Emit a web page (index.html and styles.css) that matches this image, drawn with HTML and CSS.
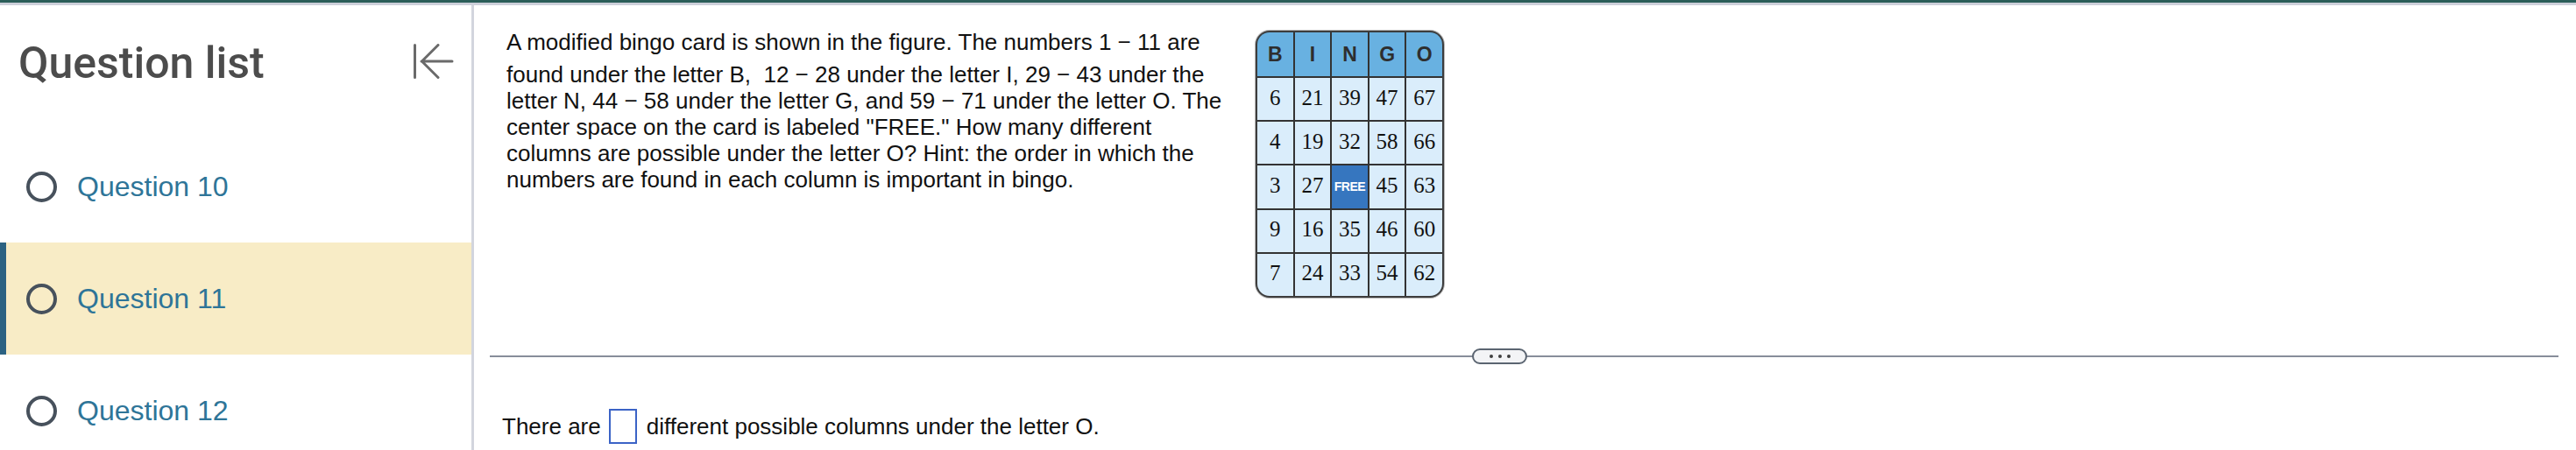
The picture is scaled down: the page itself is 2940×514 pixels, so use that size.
FILE: index.html
```html
<!DOCTYPE html>
<html lang="en">
<head>
<meta charset="utf-8">
<title>Question 11</title>
<link rel="stylesheet" href="styles.css">
</head>
<body>
<div class="topbar"></div>
<div class="layout">
  <aside class="sidebar">
    <div class="side-head">
      <h2 class="side-title">Question list</h2>
      <button class="collapse" aria-label="Collapse question list">
        <svg width="48" height="40" viewBox="0 0 48 40"><path d="M3.5 1.5v37M11 20h35M30 1.5L11.5 20L30 38.5" fill="none" stroke="#6a6a6a" stroke-width="3" stroke-linecap="round" stroke-linejoin="round"/></svg>
      </button>
    </div>
    <ul class="qlist">
      <li class="qitem"><span class="radio"></span><span class="qlabel">Question 10</span></li>
      <li class="qitem active"><span class="radio"></span><span class="qlabel">Question 11</span></li>
      <li class="qitem"><span class="radio"></span><span class="qlabel">Question 12</span></li>
    </ul>
  </aside>
  <main class="main">
    <section class="question">
      <p class="prompt">A modified bingo card is shown in the figure. The numbers <span class="m lead">1 − 11</span> are<br>found under the letter B,&nbsp; <span class="m">12 − 28</span> under the letter I, <span class="m">29 − 43</span> under the<br>letter N, <span class="m">44 − 58</span> under the letter G, and <span class="m">59 − 71</span> under the letter O. The<br>center space on the card is labeled "FREE." How many different<br>columns are possible under the letter O? Hint: the order in which the<br>numbers are found in each column is important in bingo.</p>
      <div class="bingo">
        <div class="h">B</div><div class="h">I</div><div class="h">N</div><div class="h">G</div><div class="h">O</div>
        <div class="c">6</div><div class="c">21</div><div class="c">39</div><div class="c">47</div><div class="c">67</div>
        <div class="c">4</div><div class="c">19</div><div class="c">32</div><div class="c">58</div><div class="c">66</div>
        <div class="c">3</div><div class="c">27</div><div class="c free">FREE</div><div class="c">45</div><div class="c">63</div>
        <div class="c">9</div><div class="c">16</div><div class="c">35</div><div class="c">46</div><div class="c">60</div>
        <div class="c">7</div><div class="c">24</div><div class="c">33</div><div class="c">54</div><div class="c">62</div>
      </div>
    </section>
    <div class="divider"><span class="handle"><i></i><i></i><i></i></span></div>
    <section class="answer">There are<span class="box"></span>different possible columns under the letter O.</section>
  </main>
</div>
</body>
</html>
```
FILE: styles.css
```css
html, body {
  margin: 0;
  padding: 0;
  background: #ffffff;
}
body {
  width: 2940px;
  height: 514px;
  overflow: hidden;
  font-family: "Liberation Sans", Arial, sans-serif;
}
.topbar {
  height: 3px;
  background: #2b5e59;
  border-bottom: 3px solid #cdd0da;
}
.layout {
  display: flex;
  height: 508px;
}
.sidebar {
  width: 538px;
  flex: none;
  border-right: 3px solid #d2d5de;
}
.side-head {
  display: flex;
  justify-content: space-between;
  align-items: flex-start;
  height: 143px;
  box-sizing: border-box;
  padding: 41px 20px 0 21px;
}
.side-title {
  margin: 0;
  font-family: Roboto, "Liberation Sans", sans-serif;
  font-weight: 500;
  font-size: 50px;
  line-height: 50px;
  color: #4c4c4c;
}
.collapse {
  margin: 3px 0 0 0;
  padding: 0;
  border: 0;
  background: none;
  width: 48px;
  height: 40px;
  display: block;
}
.collapse svg {
  display: block;
}
.qlist {
  list-style: none;
  margin: 0;
  padding: 0;
}
.qitem {
  height: 128px;
  display: flex;
  align-items: center;
  gap: 23px;
  padding-left: 30px;
}
.qitem.active {
  background: #f8ecc6;
  box-shadow: inset 7px 0 0 #2c6282;
}
.radio {
  width: 35px;
  height: 35px;
  box-sizing: border-box;
  border: 4px solid #47515c;
  border-radius: 50%;
  flex: none;
}
.qlabel {
  font-size: 32px;
  color: #2e7598;
}
.main {
  flex: 1;
  display: flex;
  flex-direction: column;
}
.question {
  display: flex;
  align-items: flex-start;
  height: 400px;
  box-sizing: border-box;
  padding: 27px 0 0 37px;
}
.prompt {
  margin: 0;
  width: 830px;
  flex: none;
  font-size: 26px;
  line-height: 30px;
  color: #111111;
  white-space: nowrap;
}
.m {
  white-space: nowrap;
}
.m.lead {
  display: inline-block;
  padding-bottom: 7px;
}
.bingo {
  margin: 2px 0 0 25px;
  width: 215px;
  height: 305px;
  box-sizing: border-box;
  border: 2px solid #3d3d3d;
  border-radius: 16px;
  overflow: hidden;
  display: grid;
  grid-template-columns: repeat(5, 1fr);
  grid-template-rows: 50px repeat(5, 1fr);
  gap: 2px;
  background: #333333;
  box-shadow: 0 0 0 1px #b8b8b8;
}
.bingo .h {
  background: #68b1e1;
  font-family: "Liberation Sans", Arial, sans-serif;
  font-weight: bold;
  font-size: 23px;
  color: #2e2e2e;
  display: flex;
  align-items: center;
  justify-content: center;
}
.bingo .c {
  background: #daedfb;
  font-family: "Liberation Serif", "Times New Roman", serif;
  font-size: 25px;
  color: #111111;
  display: flex;
  align-items: center;
  justify-content: center;
  padding-bottom: 3px;
}
.bingo .c.free {
  background: #3676bf;
  color: #ffffff;
  font-family: "Liberation Sans", Arial, sans-serif;
  font-weight: bold;
  font-size: 14px;
  letter-spacing: -0.5px;
  padding-bottom: 0;
}
.divider {
  position: relative;
  flex: none;
  height: 2px;
  background: #878d9a;
  margin: 0 20px 0 18px;
}
.handle {
  position: absolute;
  left: 1121px;
  top: -8px;
  width: 63px;
  height: 18px;
  box-sizing: border-box;
  border: 2px solid #5b6571;
  border-radius: 9px;
  background: #f3f4f6;
  display: flex;
  align-items: center;
  justify-content: center;
  gap: 6px;
}
.handle i {
  width: 4px;
  height: 4px;
  border-radius: 50%;
  background: #3f3f3f;
}
.answer {
  display: flex;
  align-items: center;
  padding: 59px 0 0 32px;
  font-size: 26px;
  line-height: 30px;
  color: #111111;
}
.box {
  width: 32px;
  height: 40px;
  box-sizing: border-box;
  border: 2px solid #3b63c6;
  margin: 0 11px 0 9px;
  flex: none;
}
```
